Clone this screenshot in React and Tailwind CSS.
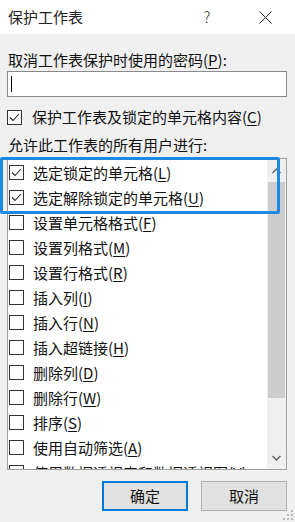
import React from "react";

const font = { fontFamily: '"Noto Sans CJK SC", "Noto Sans", sans-serif' };

function Acc({ pre, k, post = ")" }) {
  return (
    <span>
      {pre}(<span className="underline underline-offset-2 decoration-1">{k}</span>{post}
    </span>
  );
}

function Box({ checked }) {
  return (
    <div className="w-[15px] h-[15px] border border-[#333] bg-white flex items-center justify-center shrink-0">
      {checked && (
        <svg width="11" height="9" viewBox="0 0 11 9">
          <polyline points="1,4.5 4,7.5 10,1" fill="none" stroke="#222" strokeWidth="1.1" />
        </svg>
      )}
    </div>
  );
}

const rows = [
  ["选定锁定的单元格", "L", true],
  ["选定解除锁定的单元格", "U", true],
  ["设置单元格格式", "F", false],
  ["设置列格式", "M", false],
  ["设置行格式", "R", false],
  ["插入列", "I", false],
  ["插入行", "N", false],
  ["插入超链接", "H", false],
  ["删除列", "D", false],
  ["删除行", "W", false],
  ["排序", "S", false],
  ["使用自动筛选", "A", false],
  ["使用数据透视表和数据透视图", "V", false],
];

export default function App() {
  return (
    <div className="w-[295px] h-[522px] bg-[#f0f0f0] relative overflow-hidden text-[15px] text-[#111]" style={font}>
      {/* title bar */}
      <div className="h-[34px] bg-white flex items-center pl-[8px]">
        <div className="flex-1 leading-[20px] text-[#222]">保护工作表</div>
        <div className="w-[20px] text-center leading-[20px] text-[#222] font-light">?</div>
        <div className="w-[25px]" />
        <div className="w-[46px] flex items-center justify-center">
          <svg width="13" height="13" viewBox="0 0 13 13">
            <line x1="0.5" y1="0.5" x2="12.5" y2="12.5" stroke="#222" strokeWidth="1" />
            <line x1="12.5" y1="0.5" x2="0.5" y2="12.5" stroke="#222" strokeWidth="1" />
          </svg>
        </div>
        <div className="w-[7px]" />
      </div>

      {/* body */}
      <div className="pl-[7px] pr-[8px] flex flex-col">
        <div className="mt-[16px] h-[20px] leading-[20px] pl-[1px]">
          取消工作表保护时使用的密码<Acc k="P" post="):" />
        </div>
        <div className="mt-[1px] h-[26px] bg-white border border-[#8a8a8a] flex items-center pl-[3px]">
          <div className="w-[1px] h-[16px] bg-black" />
        </div>
        <div className="mt-[10px] h-[20px] flex items-center">
          <Box checked />
          <div className="ml-[10px] leading-[20px]">
            保护工作表及锁定的单元格内容<Acc k="C" />
          </div>
        </div>
        <div className="mt-[8px] h-[20px] leading-[20px] pl-[1px]">允许此工作表的所有用户进行:</div>

        {/* list */}
        <div className="mt-[3px] h-[312px] bg-white border border-[#a0a0a0] flex relative">
          <div className="flex-1 overflow-hidden pt-[1px] flex flex-col">
            {rows.map(([t, k, c]) => (
              <div key={t} className="h-[25px] shrink-0 flex items-center pl-[1px]">
                <Box checked={c} />
                <div className="ml-[9px] leading-[20px] whitespace-nowrap">
                  <Acc pre={t} k={k} />
                </div>
              </div>
            ))}
          </div>
          <div className="w-[19px] bg-[#f0f0f0] flex flex-col">
            <div className="h-[23px] flex items-center justify-center">
              <svg width="9" height="6" viewBox="0 0 9 6">
                <polyline points="0.5,5 4.5,1 8.5,5" fill="none" stroke="#606060" strokeWidth="1.4" />
              </svg>
            </div>
            <div className="h-[216px] mx-[1px] bg-[#cdcdcd]" />
            <div className="flex-1" />
            <div className="h-[22px] flex items-center justify-center">
              <svg width="9" height="6" viewBox="0 0 9 6">
                <polyline points="0.5,1 4.5,5 8.5,1" fill="none" stroke="#606060" strokeWidth="1.4" />
              </svg>
            </div>
          </div>
          {/* highlight */}
          <div className="absolute left-[-8px] top-[-2px] w-[280px] h-[57px] border-[3px] border-[#1e88e5] rounded-[2px] pointer-events-none" />
        </div>

        {/* buttons */}
        <div className="mt-[11px] flex justify-end gap-[13px]">
          <div className="w-[86px] h-[30px] bg-[#e1e1e1] border-2 border-[#0078d7] flex items-center justify-center leading-[20px]">
            确定
          </div>
          <div className="w-[86px] h-[30px] bg-[#e1e1e1] border border-[#adadad] flex items-center justify-center leading-[20px]">
            取消
          </div>
        </div>
      </div>

      {/* resize grip */}
      <svg className="absolute right-[2px] bottom-[2px]" width="10" height="10" viewBox="0 0 10 10">
        {[[8, 0], [8, 4], [4, 4], [8, 8], [4, 8], [0, 8]].map(([x, y]) => (
          <rect key={x + "-" + y} x={x} y={y} width="2" height="2" fill="#b8b8b8" />
        ))}
      </svg>
    </div>
  );
}
